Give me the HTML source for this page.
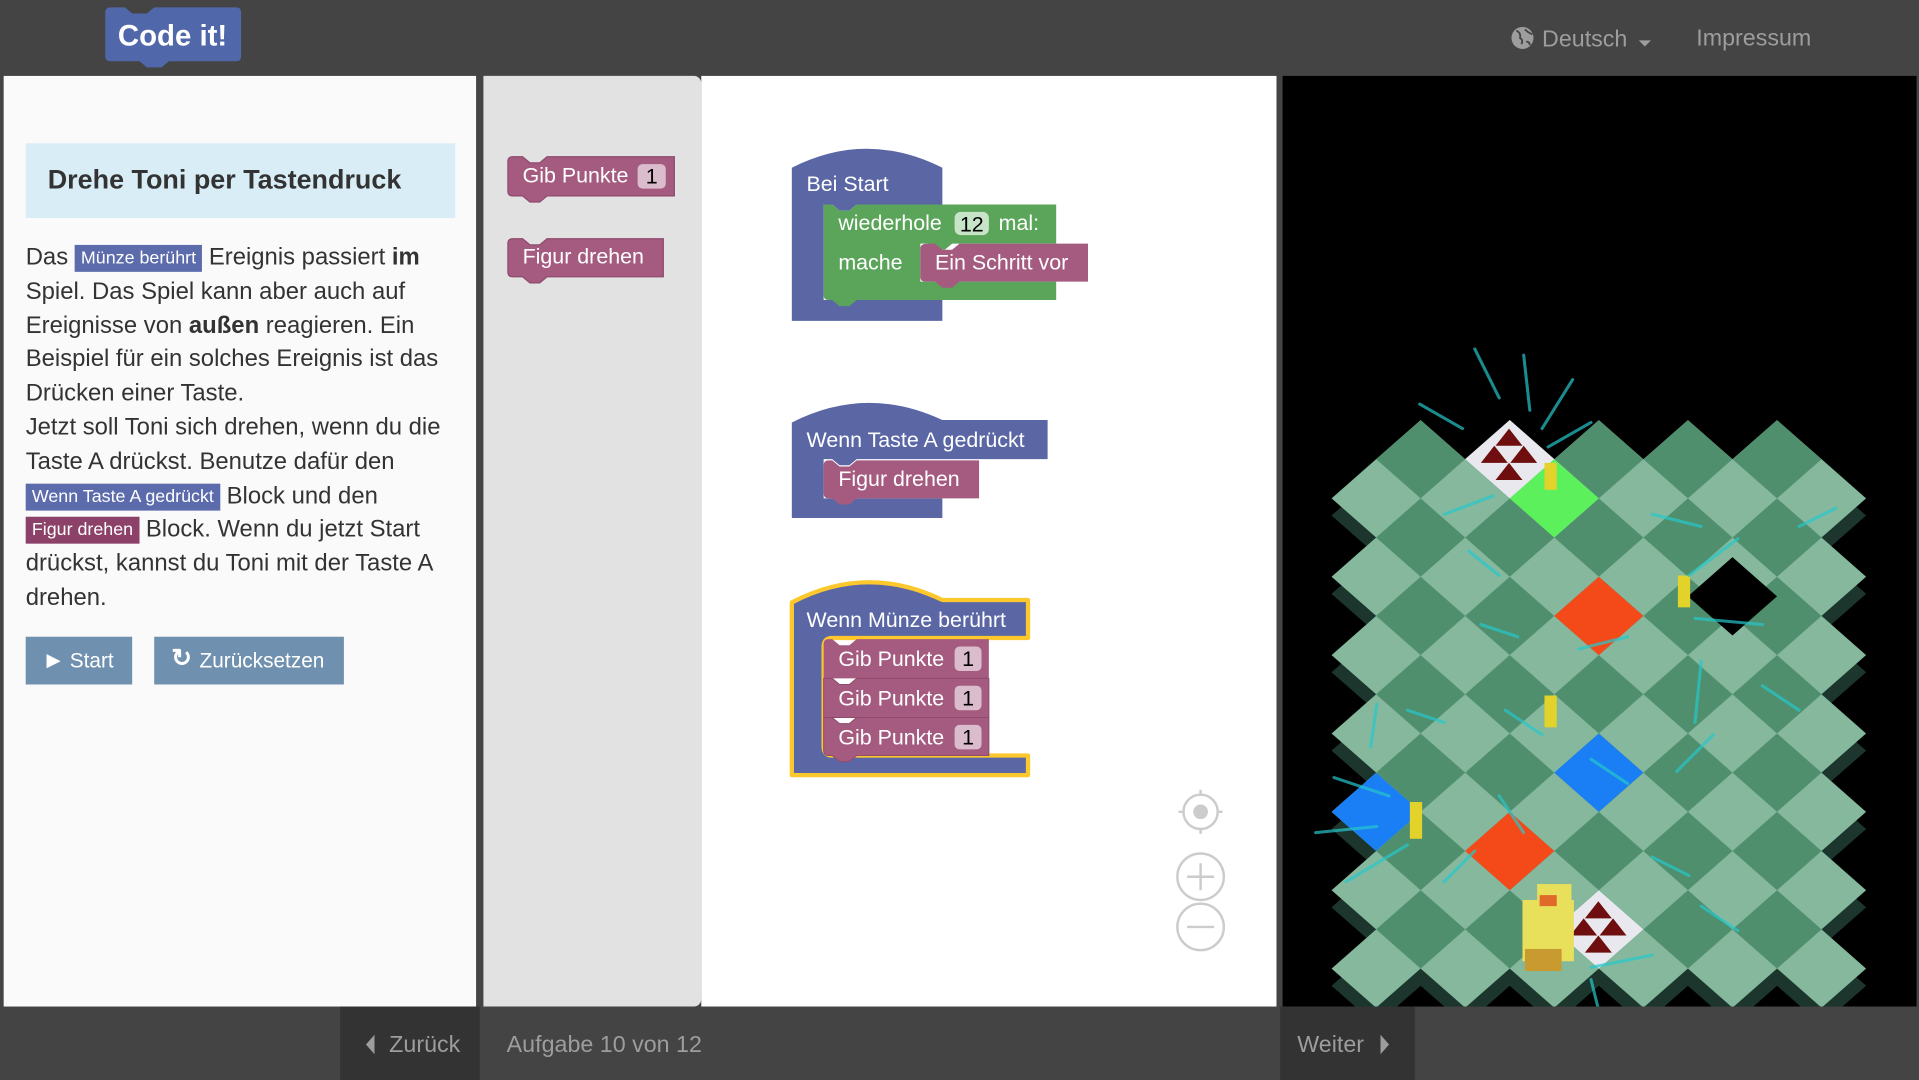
<!DOCTYPE html>
<html><head><meta charset="utf-8"><style>
html,body{margin:0;padding:0;width:1919px;height:1080px;overflow:hidden;background:#444;}
#s{position:absolute;left:0;top:0;width:1568px;height:882px;transform-origin:0 0;transform:scale(1.22385,1.22449);font-family:"Liberation Sans",sans-serif;background:#444;}
.a{position:absolute;}
#left{left:3px;top:62px;width:386px;height:760px;background:#fafafa;}
#title{left:18px;top:55px;width:351px;height:61px;background:#d9edf7;}
#title span{position:absolute;left:18px;top:17px;font-size:22px;font-weight:bold;color:#333;}
#txt{left:18px;top:135px;width:362px;font-size:19.5px;line-height:27.8px;color:#333;}
.bd{display:inline-block;color:#fff;font-size:14.6px;line-height:22px;padding:0 5px;vertical-align:1px;}
.btn{background:#7090b0;color:#fff;font-size:17px;height:39px;line-height:39px;top:458px;}
#tb{left:395px;top:62px;width:178px;height:760px;background:#e2e2e2;border-radius:0 6px 6px 0;}
#ws{left:573px;top:62px;width:470px;height:760px;background:#fff;}
#game{left:1048px;top:62px;width:518px;height:760px;background:#000;}
.nav{color:#9d9d9d;font-size:19px;}
</style></head><body><div id="s">
<div class="a" id="left">
 <div class="a" id="title"><span>Drehe Toni per Tastendruck</span></div>
 <div class="a" id="txt">Das <span class="bd" style="background:#5b6bac">Münze berührt</span> Ereignis passiert <b>im</b> Spiel. Das Spiel kann aber auch auf Ereignisse von <b>außen</b> reagieren. Ein Beispiel für ein solches Ereignis ist das Drücken einer Taste.<br>Jetzt soll Toni sich drehen, wenn du die Taste A drückst. Benutze dafür den <span class="bd" style="background:#5b6bac">Wenn Taste A gedrückt</span> Block und den <span class="bd" style="background:#8c4268">Figur drehen</span> Block. Wenn du jetzt Start drückst, kannst du Toni mit der Taste A drehen.</div>
 <div class="a btn" style="left:18px;width:87px;"><span style="position:absolute;left:17px;top:0;font-size:15px">&#9654;</span><span style="position:absolute;left:36px">Start</span></div>
 <div class="a btn" style="left:123px;width:155px;"><span style="position:absolute;left:14px;top:-1px;font-size:20px;font-weight:bold">&#8635;</span><span style="position:absolute;left:37px">Zurücksetzen</span></div>
</div>
<div class="a" id="tb"></div>
<div class="a" id="ws"></div>
<div class="a" id="game"></div>
<div class="a" style="left:278px;top:822px;width:114px;height:60px;background:#333"></div>
<div class="a" style="left:1046px;top:822px;width:110px;height:60px;background:#333"></div>
<div class="a nav" style="left:318px;top:843px">Zurück</div>
<div class="a nav" style="left:414px;top:843px">Aufgabe 10 von 12</div>
<div class="a nav" style="left:1060px;top:843px">Weiter</div>
<div class="a nav" style="left:1260px;top:22px">Deutsch</div>
<div class="a nav" style="left:1386px;top:21px">Impressum</div>
<svg class="a" style="left:0;top:0" width="1568" height="882" viewBox="0 0 1568 882" font-family="Liberation Sans, sans-serif">
<path d="M91,6 H102 L108,11 H120 L126,6 H193 Q197,6 197,10 V46 Q197,50 193,50 H138 L132,55 H120 L114,50 H91 Q86,50 86,46 V10 Q86,6 91,6 Z" fill="#5068aa"/>
<text x="141" y="37" fill="#fff" font-size="24" font-weight="bold" text-anchor="middle">Code it!</text>
<circle cx="1244" cy="31" r="9" fill="#9d9d9d"/><path d="M1239,25 q4,2 3,6 q3,2 1,5 M1246,24 q3,3 6,4 M1247,34 q3,0 3,3" stroke="#444" stroke-width="1.5" fill="none"/>
<path d="M1339,33 h10 l-5,5 z" fill="#9d9d9d"/>
<path d="M306,845 v16 l-7,-8 z" fill="#9d9d9d"/>
<path d="M1128,845 v16 l7,-8 z" fill="#9d9d9d"/>
<g font-size="17.5">
<path d="M419,128 H427 L433,133 H441 L447,128 H551 V160 H447 L441,165 H433 L427,160 H419 Q415,160 415,156 V132 Q415,128 419,128 Z" fill="#a55b80" stroke="#8f4a6c" stroke-width="1"/>
<text x="427" y="149" fill="#fff">Gib Punkte</text>
<rect x="521" y="134" width="23" height="20" rx="4" fill="#dbbccd"/><text x="532.5" y="150" fill="#000" text-anchor="middle">1</text>
<path d="M419,195 H427 L433,200 H441 L447,195 H542 V226 H447 L441,231 H433 L427,226 H419 Q415,226 415,222 V199 Q415,195 419,195 Z" fill="#a55b80" stroke="#8f4a6c" stroke-width="1"/>
<text x="427" y="215" fill="#fff">Figur drehen</text>

<path d="M647,262 V137 Q708,106 770,137 V167 H700 L694,172 H686 L680,167 H673 V245 H770 V262 Z" fill="#5b67a5"/>
<text x="659" y="156" fill="#fff">Bei Start</text>
<path d="M673,167 H680 L686,172 H694 L700,167 H863 V199 H778 L772,204 H764 L758,199 H752 V230 H863 V245 H700 L694,250 H686 L680,245 H677 Q673,245 673,241 Z" fill="#5ba55b"/>
<text x="685" y="188" fill="#fff">wiederhole</text>
<rect x="780" y="173" width="28" height="19" rx="5" fill="#c8e4c8"/><text x="794" y="189" fill="#000" text-anchor="middle">12</text>
<text x="816" y="188" fill="#fff">mal:</text>
<text x="685" y="220" fill="#fff">mache</text>
<path d="M758,199 H764 L770,204 H778 L784,199 H889 V230 H784 L778,235 H770 L764,230 H756 Q752,230 752,226 V203 Q752,199 758,199 Z" fill="#a55b80"/>
<text x="764" y="220" fill="#fff">Ein Schritt vor</text>

<path d="M647,423 V345 Q708,314 770,343 H856 V375 H700 L694,380 H686 L680,375 H673 V407 H770 V423 Z" fill="#5b67a5"/>
<text x="659" y="365" fill="#fff">Wenn Taste A gedrückt</text>
<path d="M677,376 H680 L686,381 H694 L700,376 H800 V407 H700 L694,412 H686 L680,407 H677 Q673,407 673,403 V380 Q673,376 677,376 Z" fill="#a55b80"/>
<text x="685" y="397" fill="#fff">Figur drehen</text>

<path d="M647,633 V492 Q708,460 770,490 H840 V521 H680 Q673,521 673,528 V610 Q673,617 680,617 H840 V633 Z" fill="#5b67a5" stroke="#fdc82c" stroke-width="3.5" stroke-linejoin="round"/>
<text x="659" y="512" fill="#fff">Wenn Münze berührt</text>
<g>
<path d="M677,522 H680 L686,527 H694 L700,522 H808 V554 H673 V526 Q673,522 677,522 Z" fill="#a55b80"/>
<path d="M673,554 H680 L686,559 H694 L700,554 H808 V586 H673 Z" fill="#a55b80" stroke="#8f4a6c" stroke-width="0.8"/>
<path d="M673,586 H680 L686,591 H694 L700,586 H808 V617 H700 L694,622 H686 L680,617 H677 Q673,617 673,613 Z" fill="#a55b80" stroke="#8f4a6c" stroke-width="0.8"/>
<text x="685" y="544" fill="#fff">Gib Punkte</text><text x="685" y="576" fill="#fff">Gib Punkte</text><text x="685" y="608" fill="#fff">Gib Punkte</text>
<rect x="780" y="528" width="22" height="20" rx="4" fill="#dbbccd"/><text x="791" y="544" fill="#000" text-anchor="middle">1</text>
<rect x="780" y="560" width="22" height="20" rx="4" fill="#dbbccd"/><text x="791" y="576" fill="#000" text-anchor="middle">1</text>
<rect x="780" y="592" width="22" height="20" rx="4" fill="#dbbccd"/><text x="791" y="608" fill="#000" text-anchor="middle">1</text>
</g>
</g>
<g stroke="#ccc" stroke-width="2" fill="none">
<circle cx="981" cy="663" r="14"/><circle cx="981" cy="663" r="5" fill="#ccc"/>
<path d="M981,645 v5 M981,676 v5 M963,663 h5 M994,663 h5"/>
<circle cx="981" cy="716" r="19"/><path d="M981,705 v22 M970,716 h22"/>
<circle cx="981" cy="757" r="19"/><path d="M970,757 h22"/>
</g>
<defs>
<pattern id="ck" x="1088" y="375" width="72.8" height="64" patternUnits="userSpaceOnUse">
<rect width="72.8" height="64" fill="#4f8f6e"/>
<polygon points="0,32 36.4,0 72.8,32 36.4,64" fill="#86b89d"/>
</pattern>
<clipPath id="gc"><rect x="1048" y="62" width="518" height="760"/></clipPath>
</defs>
<g clip-path="url(#gc)">
<polygon transform="translate(0,14)" fill="#1c362d" points="1088,407 1124.4,375 1160.8,343 1197.2,375 1233.6,343 1270,375 1306.4,343 1342.8,375 1379.2,343 1415.6,375 1452,343 1488.4,375 1524.8,407 1488.4,439 1524.8,471 1488.4,503 1524.8,535 1488.4,567 1524.8,599 1488.4,631 1524.8,663 1488.4,695 1524.8,727 1488.4,759 1524.8,791 1488.4,823 1452,791 1415.6,823 1379.2,791 1342.8,823 1306.4,791 1270,823 1233.6,791 1197.2,823 1160.8,791 1124.4,823 1088,791 1124.4,759 1088,727 1124.4,695 1088,663 1124.4,631 1088,599 1124.4,567 1088,535 1124.4,503 1088,471 1124.4,439"/>
<polygon fill="url(#ck)" points="1088,407 1124.4,375 1160.8,343 1197.2,375 1233.6,343 1270,375 1306.4,343 1342.8,375 1379.2,343 1415.6,375 1452,343 1488.4,375 1524.8,407 1488.4,439 1524.8,471 1488.4,503 1524.8,535 1488.4,567 1524.8,599 1488.4,631 1524.8,663 1488.4,695 1524.8,727 1488.4,759 1524.8,791 1488.4,823 1452,791 1415.6,823 1379.2,791 1342.8,823 1306.4,791 1270,823 1233.6,791 1197.2,823 1160.8,791 1124.4,823 1088,791 1124.4,759 1088,727 1124.4,695 1088,663 1124.4,631 1088,599 1124.4,567 1088,535 1124.4,503 1088,471 1124.4,439"/>
<polygon points="1233.6,407 1270,375 1306.4,407 1270,439" fill="#5cf05c"/>
<polygon points="1270,503 1306.4,471 1342.8,503 1306.4,535" fill="#f44a1a"/>
<polygon points="1197.2,695 1233.6,663 1270,695 1233.6,727" fill="#f44a1a"/>
<polygon points="1270,631 1306.4,599 1342.8,631 1306.4,663" fill="#1a7ef4"/>
<polygon points="1088,663 1124.4,631 1160.8,663 1124.4,695" fill="#1a7ef4"/>
<polygon points="1379.2,487 1415.6,455 1452,487 1415.6,519" fill="#000"/>
<polygon points="1197.2,375 1233.6,343 1270,375 1233.6,407" fill="#e8e8ee"/>
<polygon points="1270,759 1306.4,727 1342.8,759 1306.4,791" fill="#e8e8ee"/>
<g fill="#6e0e0e">
<polygon points="1222,364 1233,350 1244,364"/><polygon points="1210,378 1221,364 1232,378"/><polygon points="1234,378 1245,364 1256,378"/><polygon points="1222,392 1233,378 1244,392"/>
<polygon points="1295,750 1306,736 1317,750"/><polygon points="1283,764 1294,750 1305,764"/><polygon points="1307,764 1318,750 1329,764"/><polygon points="1295,778 1306,764 1317,778"/>
</g>
<g fill="#e3d22a">
<rect x="1262" y="378" width="10" height="22"/><rect x="1371" y="470" width="10" height="26"/><rect x="1262" y="568" width="10" height="26"/><rect x="1152" y="655" width="10" height="30"/>
</g>
<g fill="#e8e05a"><rect x="1244" y="735" width="42" height="50"/><rect x="1256" y="722" width="28" height="20"/></g>
<rect x="1258" y="731" width="14" height="9" fill="#e06a2a"/>
<rect x="1246" y="775" width="30" height="18" fill="#c89a30"/>
<g stroke="#25c8cc" stroke-width="2.5" opacity="0.7" stroke-linecap="round">
<path d="M1205,285 l20,40 M1245,290 l5,45 M1285,310 l-25,40 M1160,330 l35,20 M1300,345 l-35,20 M1420,440 l-40,30 M1440,510 l-55,-5 M1390,540 l-5,50 M1330,520 l-40,10 M1230,580 l30,20 M1090,635 l45,15 M1075,680 l50,-5 M1100,720 l50,-30 M1180,720 l25,-25 M1310,840 l-10,-40 M1350,780 l-50,10 M1225,650 l20,30 M1330,640 l-30,-20 M1180,420 l40,-15 M1200,450 l25,20 M1350,420 l40,10 M1400,600 l-30,30 M1440,560 l30,20 M1150,580 l30,10 M1120,610 l5,-35 M1240,520 l-30,-10 M1350,700 l30,15 M1420,760 l-30,-20 M1470,430 l30,-15"/>
</g>
</g>
</svg>
</div></body></html>
